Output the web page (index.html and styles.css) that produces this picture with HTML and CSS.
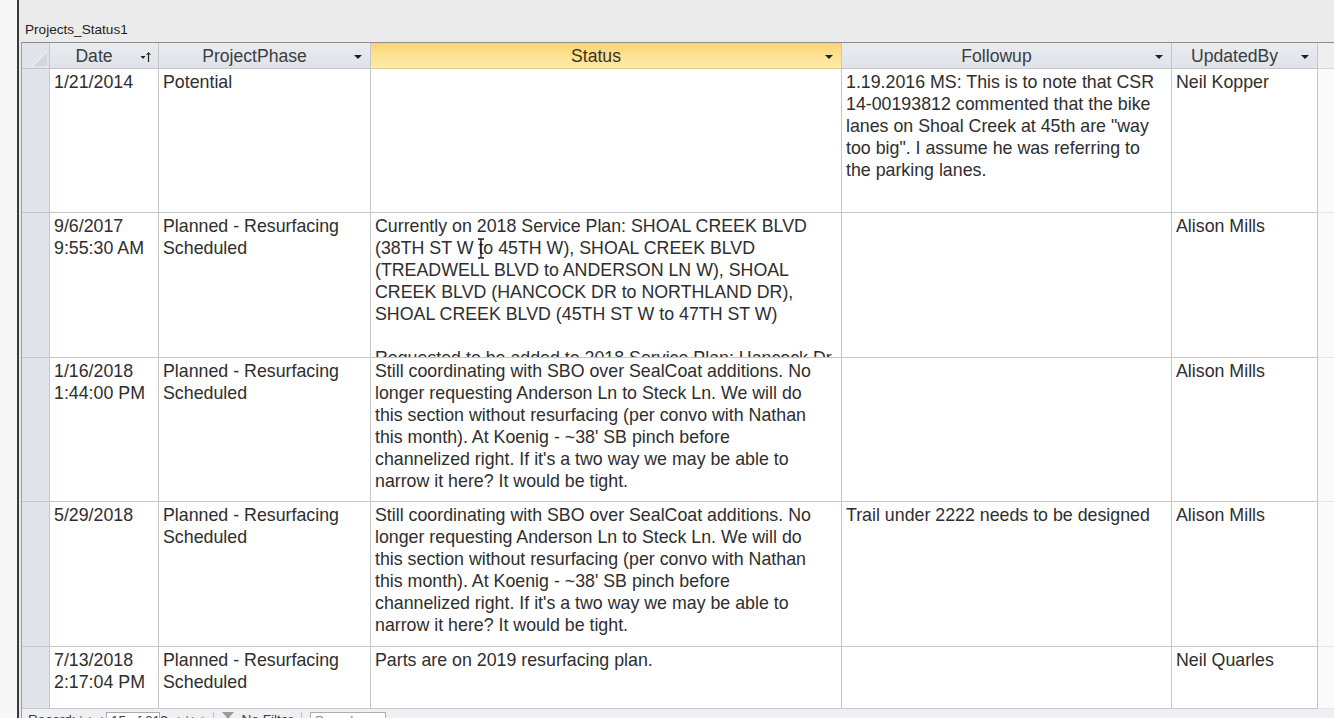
FILE: index.html
```html
<!DOCTYPE html>
<html>
<head>
<meta charset="utf-8">
<link rel="stylesheet" href="styles.css">
</head>
<body>
<div class="side"></div>
<div class="main">
  <div class="title">Projects_Status1</div>
  <div class="grid">
    <div class="h sel corner"><svg width="18" height="18" viewBox="0 0 18 18"><path d="M2 16 L16 2 L16 16 Z" fill="#d3d6dc"/><path d="M2 16 L16 2" stroke="#f4f5f7" stroke-width="1"/></svg></div>
    <div class="h"><span class="hn">Date</span><span class="ha"><svg width="12" height="12" viewBox="0 0 12 12"><path d="M0.5 5 L5.5 5 L3 8 Z" fill="#222"/><path d="M8.5 11 L8.5 2" stroke="#222" stroke-width="1.2"/><path d="M6.5 4 L8.5 1.5 L10.5 4" stroke="#222" stroke-width="1" fill="none"/></svg></span></div>
    <div class="h"><span class="hn">ProjectPhase</span><span class="ha"><i class="tri"></i></span></div>
    <div class="h hs"><span class="hn">Status</span><span class="ha"><i class="tri"></i></span></div>
    <div class="h"><span class="hn">Followup</span><span class="ha"><i class="tri"></i></span></div>
    <div class="h"><span class="hn">UpdatedBy</span><span class="ha"><i class="tri"></i></span></div>
    <div class="h fill"></div>

    <div class="c sel"></div>
    <div class="c">1/21/2014</div>
    <div class="c">Potential</div>
    <div class="c"></div>
    <div class="c">1.19.2016 MS: This is to note that CSR<br>14-00193812 commented that the bike<br>lanes on Shoal Creek at 45th are "way<br>too big". I assume he was referring to<br>the parking lanes.</div>
    <div class="c">Neil Kopper</div>
    <div class="c fill"></div>

    <div class="c sel"></div>
    <div class="c">9/6/2017<br>9:55:30 AM</div>
    <div class="c">Planned - Resurfacing<br>Scheduled</div>
    <div class="c cur">Currently on 2018 Service Plan: SHOAL CREEK BLVD<br>(38TH ST W to 45TH W), SHOAL CREEK BLVD<br>(TREADWELL BLVD to ANDERSON LN W), SHOAL<br>CREEK BLVD (HANCOCK DR to NORTHLAND DR),<br>SHOAL CREEK BLVD (45TH ST W to 47TH ST W)<br><br>Requested to be added to 2018 Service Plan: Hancock Dr<svg class="ibeam" width="8" height="21" viewBox="0 0 8 21"><path d="M1 1 H3 Q4 1 4 2.5 V18.5 Q4 20 3 20 H1 M7 1 H5 Q4 1 4 2.5 M4 18.5 Q4 20 5 20 H7" stroke="#111" stroke-width="1.3" fill="none"/></svg></div>
    <div class="c"></div>
    <div class="c">Alison Mills</div>
    <div class="c fill"></div>

    <div class="c sel"></div>
    <div class="c">1/16/2018<br>1:44:00 PM</div>
    <div class="c">Planned - Resurfacing<br>Scheduled</div>
    <div class="c">Still coordinating with SBO over SealCoat additions. No<br>longer requesting Anderson Ln to Steck Ln. We will do<br>this section without resurfacing (per convo with Nathan<br>this month). At Koenig - ~38' SB pinch before<br>channelized right. If it's a two way we may be able to<br>narrow it here? It would be tight.</div>
    <div class="c"></div>
    <div class="c">Alison Mills</div>
    <div class="c fill"></div>

    <div class="c sel"></div>
    <div class="c">5/29/2018</div>
    <div class="c">Planned - Resurfacing<br>Scheduled</div>
    <div class="c">Still coordinating with SBO over SealCoat additions. No<br>longer requesting Anderson Ln to Steck Ln. We will do<br>this section without resurfacing (per convo with Nathan<br>this month). At Koenig - ~38' SB pinch before<br>channelized right. If it's a two way we may be able to<br>narrow it here? It would be tight.</div>
    <div class="c">Trail under 2222 needs to be designed</div>
    <div class="c">Alison Mills</div>
    <div class="c fill"></div>

    <div class="c sel"></div>
    <div class="c">7/13/2018<br>2:17:04 PM</div>
    <div class="c">Planned - Resurfacing<br>Scheduled</div>
    <div class="c">Parts are on 2019 resurfacing plan.</div>
    <div class="c"></div>
    <div class="c">Neil Quarles</div>
    <div class="c fill"></div>
  </div>
  <div class="nav">
    <span class="nt">Record: <b class="btn">|◀</b> <b class="btn">◀</b></span>
    <span class="box">15 of 219</span>
    <span class="nt"><b class="btn">▶</b> <b class="btn">▶|</b> <b class="btn">▶<em>*</em></b></span>
    <span class="sep"></span>
    <span class="nt filt"><svg width="12" height="12" viewBox="0 0 12 12"><path d="M0 0 H12 L7.5 5 V11 L4.5 9 V5 Z" fill="#9a9a9a"/></svg> No Filter</span>
    <span class="sep"></span>
    <span class="box search">Search</span>
  </div>
</div>
</body>
</html>
```

FILE: styles.css
```css
html, body {
  margin: 0;
  height: 100%;
  overflow: hidden;
}
body {
  font-family: "Liberation Sans", Arial, sans-serif;
  background: #f7f7f7;
  display: flex;
}
.side {
  width: 17px;
  flex: none;
}
.main {
  flex: 1;
  min-width: 0;
  border-left: 2px solid #3a3a3a;
  background: #ebebeb;
  display: flex;
  flex-direction: column;
}
.title {
  flex: none;
  height: 42px;
  box-sizing: border-box;
  padding: 22px 0 0 6px;
  font-size: 13.6px;
  line-height: 16px;
  color: #1e1e1e;
}
.grid {
  flex: none;
  margin-left: 2px;
  border-left: 1px solid #9d9d9d;
  border-top: 1px solid #8d8d8d;
  display: grid;
  grid-template-columns: 28px 109px 212px 471px 330px 146px 1fr;
  grid-template-rows: 26px 144px 145px 144px 145px 62px;
  background: #fff;
}
.h, .c {
  box-sizing: border-box;
  border-right: 1px solid #c6c6c6;
  border-bottom: 1px solid #c6c6c6;
  overflow: hidden;
  white-space: nowrap;
  font-size: 17.8px;
  line-height: 22px;
}
.h {
  display: flex;
  align-items: center;
  background: linear-gradient(#e9ecf1, #dfe3e9);
  color: #3d3d3d;
  font-size: 17.6px;
}
.hn {
  flex: 1;
  text-align: center;
  padding-left: 4px;
}
.ha {
  width: 24px;
  flex: none;
  display: flex;
  justify-content: center;
  align-items: center;
  padding-top: 3px;
}
.tri {
  width: 0;
  height: 0;
  border-left: 4px solid transparent;
  border-right: 4px solid transparent;
  border-top: 4px solid #1e1e1e;
}
.hs {
  background: linear-gradient(#fcd36f 0%, #fde396 55%, #feeaa6 100%);
  border-bottom-color: #e2cf92;
  color: #3a3320;
}
.corner {
  align-items: flex-end;
  justify-content: flex-end;
  padding: 0 3px 3px 0;
}
.c {
  padding: 2px 4px 0 4px;
  color: #2e2e2e;
}
.sel {
  background: #e1e4ea;
  padding: 0;
}
.h.sel {
  background: #e1e4ea;
}
.fill {
  border-right: none;
  background: #fafafa;
  border-bottom-color: #e4e4e4;
}
.h.fill {
  background: #efefef;
  border-bottom-color: #d4d4d4;
}
.cur {
  position: relative;
}
.ibeam {
  position: absolute;
  left: 106px;
  top: 25px;
}
.nav {
  flex: none;
  height: 26px;
  margin-left: 2px;
  border-left: 1px solid #9d9d9d;
  background: #eef0f4;
  display: flex;
  align-items: flex-start;
  padding: 3px 0 0 6px;
  box-sizing: border-box;
  font-size: 13.6px;
  line-height: 16px;
  color: #3a3a3a;
  white-space: nowrap;
}
.nt {
  margin-right: 4px;
}
.btn {
  font-weight: normal;
  font-size: 11px;
  color: #555;
}
.btn em {
  color: #e8b400;
  font-style: normal;
}
.box {
  display: inline-block;
  background: #fff;
  border: 1px solid #a9acb2;
  height: 18px;
  box-sizing: border-box;
  padding: 0 4px;
  width: 54px;
  margin-right: 6px;
}
.sep {
  width: 1px;
  height: 20px;
  background: #bfc3ca;
  margin: 0 8px 0 4px;
}
.filt svg {
  margin-right: 4px;
}
.search {
  width: 76px;
  color: #8a8a8a;
}
```
